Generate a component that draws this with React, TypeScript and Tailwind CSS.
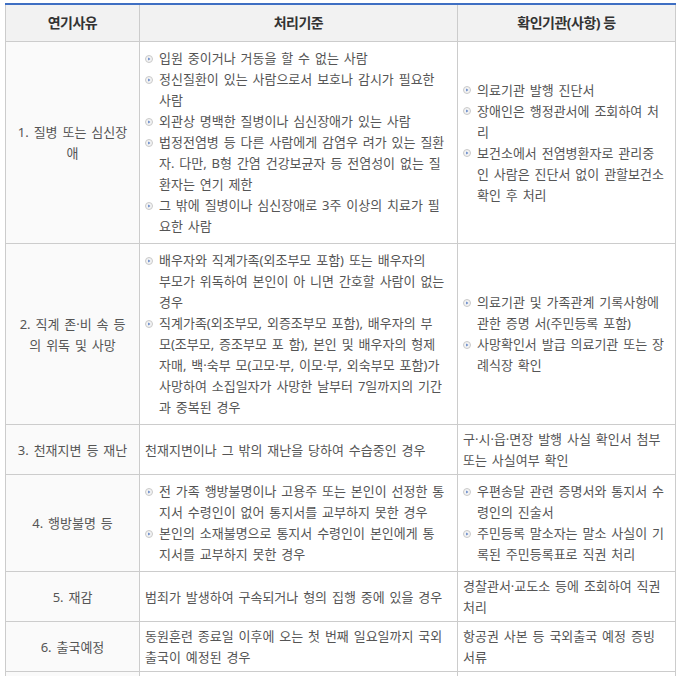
import React from "react";

type Cell = string | string[];
interface Row {
  reason: string;
  criteria: Cell;
  check: Cell;
}

const rows: Row[] = [
  {
    reason: "1. 질병 또는 심신장애",
    criteria: [
      "입원 중이거나 거동을 할 수 없는 사람",
      "정신질환이 있는 사람으로서 보호나 감시가 필요한 사람",
      "외관상 명백한 질병이나 심신장애가 있는 사람",
      "법정전염병 등 다른 사람에게 감염우 려가 있는 질환자. 다만, B형 간염 건강보균자 등 전염성이 없는 질환자는 연기 제한",
      "그 밖에 질병이나 심신장애로 3주 이상의 치료가 필요한 사람",
    ],
    check: [
      "의료기관 발행 진단서",
      "장애인은 행정관서에 조회하여 처리",
      "보건소에서 전염병환자로 관리중인 사람은 진단서 없이 관할보건소 확인 후 처리",
    ],
  },
  {
    reason: "2. 직계 존·비 속 등의 위독 및 사망",
    criteria: [
      "배우자와 직계가족(외조부모 포함) 또는 배우자의\n부모가 위독하여 본인이 아 니면 간호할 사람이 없는 경우",
      "직계가족(외조부모, 외증조부모 포함), 배우자의 부\n모(조부모, 증조부모 포 함), 본인 및 배우자의 형제자매, 백·숙부 모(고모·부, 이모·부, 외숙부모 포함)가 사망하여 소집일자가 사망한 날부터 7일까지의 기간과 중복된 경우",
    ],
    check: [
      "의료기관 및 가족관계 기록사항에 관한 증명 서(주민등록 포함)",
      "사망확인서 발급 의료기관 또는 장례식장 확인",
    ],
  },
  {
    reason: "3. 천재지변 등 재난",
    criteria: "천재지변이나 그 밖의 재난을 당하여 수습중인 경우",
    check: "구·시·읍·면장 발행 사실 확인서 첨부 또는 사실여부 확인",
  },
  {
    reason: "4. 행방불명 등",
    criteria: [
      "전 가족 행방불명이나 고용주 또는 본인이 선정한 통지서 수령인이 없어 통지서를 교부하지 못한 경우",
      "본인의 소재불명으로 통지서 수령인이 본인에게 통지서를 교부하지 못한 경우",
    ],
    check: [
      "우편송달 관련 증명서와 통지서 수령인의 진술서",
      "주민등록 말소자는 말소 사실이 기록된 주민등록표로 직권 처리",
    ],
  },
  {
    reason: "5. 재감",
    criteria: "범죄가 발생하여 구속되거나 형의 집행 중에 있을 경우",
    check: "경찰관서·교도소 등에 조회하여 직권처리",
  },
  {
    reason: "6. 출국예정",
    criteria: "동원훈련 종료일 이후에 오는 첫 번째 일요일까지 국외출국이 예정된 경우",
    check: "항공권 사본 등 국외출국 예정 증빙서류",
  },
  {
    reason: "\u00a0",
    criteria: "\u00a0",
    check: "\u00a0",
  },
];

function Bullet() {
  return (
    <svg width="8" height="8" viewBox="0 0 8 8" className="block">
      <circle cx="4" cy="4" r="3.5" fill="#f3f3f3" stroke="#c9c9c9" strokeWidth="1" />
      <path d="M3.2 2.4 L5.4 4 L3.2 5.6 Z" fill="#5b80c6" />
    </svg>
  );
}

function Content({ value }: { value: Cell }) {
  if (typeof value === "string") {
    return <div>{value}</div>;
  }
  return (
    <ul className="pt-[2px] pb-[3px]">
      {value.map((item, i) => (
        <li key={i} className="flex">
          <span className="w-[14px] shrink-0 h-[21px] flex items-center">
            <Bullet />
          </span>
          <span className="min-w-0 whitespace-pre-line">{item}</span>
        </li>
      ))}
    </ul>
  );
}

export default function App() {
  return (
    <div className="bg-white min-h-[676px] pt-[3px] pl-[5px] [font-family:'Noto_Sans','Noto_Sans_CJK_KR',sans-serif] text-[13px] leading-[21px] [word-spacing:1.5px] text-[#555]">
      <table className="w-[670px] border-collapse table-fixed">
        <colgroup>
          <col className="w-[134px]" />
          <col className="w-[318px]" />
          <col className="w-[218px]" />
        </colgroup>
        <thead>
          <tr>
            {["연기사유", "처리기준", "확인기관(사항) 등"].map((h) => (
              <th
                key={h}
                className="bg-[#f2f2f2] border border-[#cccccc] border-t-2 border-t-[#3f6fc3] py-[8px] leading-[20px] text-[14px] font-bold text-[#333] text-center tracking-[-0.5px] [word-spacing:0px]"
              >
                {h}
              </th>
            ))}
          </tr>
        </thead>
        <tbody>
          {rows.map((r, i) => (
            <tr key={i}>
              <td className="bg-[#fafafa] border border-[#cccccc] px-[10px] pt-[4px] pb-[3px] text-center align-middle">
                {r.reason}
              </td>
              <td className="border border-[#cccccc] pl-[5px] pr-[11px] pt-[4px] pb-[3px] align-middle">
                <Content value={r.criteria} />
              </td>
              <td className="border border-[#cccccc] pl-[5px] pr-[11px] pt-[4px] pb-[3px] align-middle">
                <Content value={r.check} />
              </td>
            </tr>
          ))}
        </tbody>
      </table>
    </div>
  );
}
